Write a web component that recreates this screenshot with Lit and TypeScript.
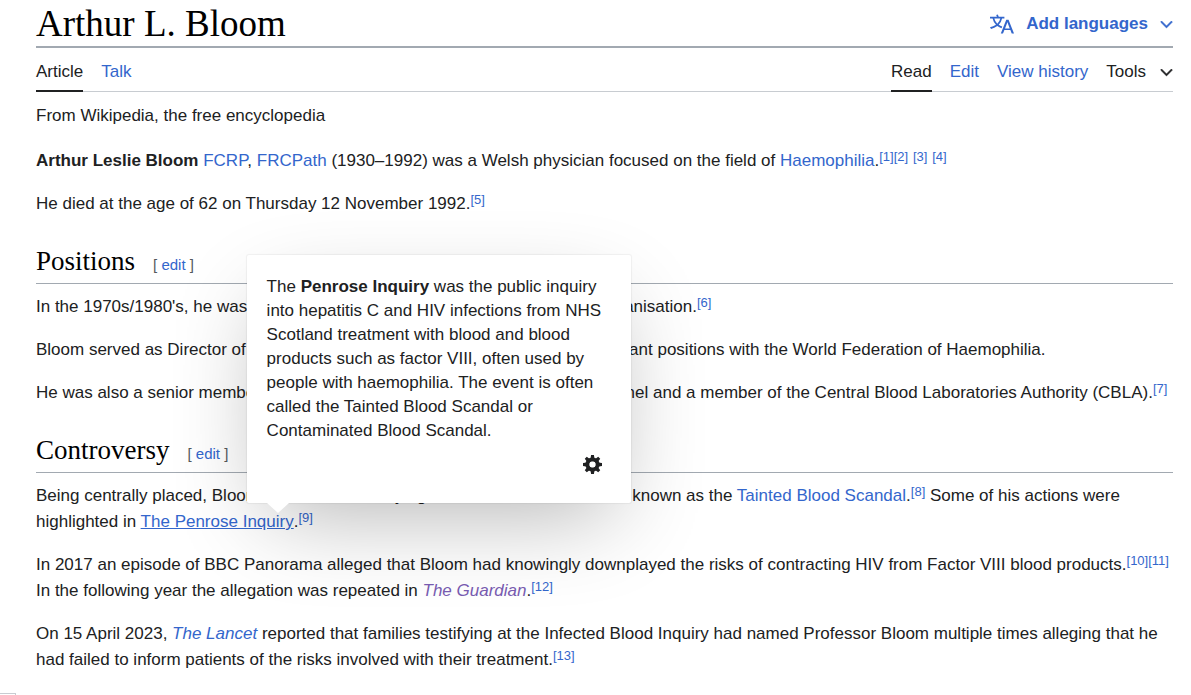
import { LitElement, html, css, svg } from "lit";
import { customElement } from "lit/decorators.js";

const chevron = svg`<path d="m17.5 4.75-7.5 7.5-7.5-7.5L1 6.25l9 9 9-9z" />`;

const cite = (n: number) => html`<sup class="ref"><a href="#cite-${n}">[${n}]</a></sup>`;

const heading = (title: string) => html`
  <div class="heading">
    <h2 class="section-title">${title}</h2>
    <span class="edit-section">[ <a href="#edit">edit</a> ]</span>
  </div>
`;

@customElement("page-preview")
class PagePreview extends LitElement {
  static styles = css`
    :host {
      display: block;
      box-sizing: border-box;
      width: 384px;
      padding: 20px;
      border-radius: 2px;
      background: #fff;
      color: #202122;
      font-size: 17px;
      line-height: 24px;
      box-shadow: 0 30px 90px -20px rgba(0, 0, 0, 0.3), 0 0 1px 1px rgba(0, 0, 0, 0.05);
    }
    :host::after {
      content: "";
      position: absolute;
      top: 100%;
      left: 20px;
      border: 11px solid transparent;
      border-top: 10px solid #fff;
      border-bottom: 0;
    }
    .extract {
      margin: 0;
    }
    .footer {
      display: flex;
      justify-content: flex-end;
      padding: 12px 9px 9px;
    }
    .settings {
      display: flex;
      padding: 0;
      border: 0;
      background: none;
      color: #202122;
    }
    .gear {
      width: 19px;
      height: 19px;
      fill: currentColor;
    }
  `;

  render() {
    const tooth = "M1.5-10h-3l-1 6.5h5m0 7h-5l1 6.5h3";
    return html`
      <p class="extract">
        The <b>Penrose Inquiry</b> was the public inquiry into hepatitis C and HIV infections from NHS Scotland
        treatment with blood and blood products such as factor VIII, often used by people with haemophilia. The event
        is often called the Tainted Blood Scandal or Contaminated Blood Scandal.
      </p>
      <div class="footer">
        <button class="settings" aria-label="Preview settings">
          <svg class="gear" viewBox="0 0 20 20">
            <g transform="translate(10 10)">
              ${[0, 45, 90, 135].map((a) => svg`<path transform="rotate(${a})" d=${tooth} />`)}
            </g>
            <path d="M10 2.5a7.5 7.5 0 0 0 0 15 7.5 7.5 0 0 0 0-15v4a3.5 3.5 0 0 1 0 7 3.5 3.5 0 0 1 0-7" />
          </svg>
        </button>
      </div>
    `;
  }
}

@customElement("app-root")
class AppRoot extends LitElement {
  static styles = css`
    :host {
      display: block;
      box-sizing: border-box;
      min-height: 100vh;
      overflow: hidden;
      position: relative;
      padding: 0 18px 0 36px;
      background: #fff;
      color: #202122;
      font-family: "Liberation Sans", Arial, sans-serif;
      font-size: 17px;
      line-height: 26px;
    }
    a {
      color: #3366cc;
      text-decoration: none;
    }
    button {
      display: flex;
      align-items: center;
      padding: 0;
      border: 0;
      background: none;
      color: inherit;
      font: inherit;
    }
    .title-bar {
      display: flex;
      justify-content: space-between;
      align-items: flex-end;
      height: 46px;
      border-bottom: 2px solid #a2a9b1;
    }
    .title {
      margin: 0;
      color: #000;
      font: 400 37px/44px Georgia, "Liberation Serif", serif;
    }
    .languages {
      padding-bottom: 9px;
      color: #3366cc;
      font-weight: 700;
      gap: 12px;
    }
    .lang-icon {
      width: 24px;
      height: 24px;
      fill: currentColor;
    }
    .chevron {
      width: 13px;
      height: 13px;
      fill: currentColor;
      stroke: currentColor;
      stroke-width: 1;
    }
    .tabs {
      display: flex;
      justify-content: space-between;
      height: 43px;
      border-bottom: 1px solid #c8ccd1;
    }
    .tab-group {
      display: flex;
      gap: 18px;
    }
    .tab {
      box-sizing: border-box;
      height: 44px;
      padding-top: 6px;
      border-bottom: 2px solid transparent;
      line-height: 36px;
    }
    .current {
      border-color: #202122;
      color: #202122;
    }
    .tools {
      gap: 14px;
    }
    .tagline {
      margin: 11px 0 19px;
    }
    .para {
      margin: 0 0 17px;
    }
    .ref {
      font-size: 13px;
      line-height: 1;
      vertical-align: 5px;
    }
    .heading {
      display: flex;
      align-items: baseline;
      gap: 18px;
      margin: 28px 0 10px;
      padding-bottom: 5px;
      border-bottom: 1px solid #a2a9b1;
    }
    .section-title {
      margin: 0;
      color: #000;
      font: 400 27px/32px Georgia, "Liberation Serif", serif;
    }
    .edit-section {
      color: #54595d;
      font-size: 15px;
    }
    .visited {
      color: #795cb2;
    }
    .anchor {
      position: relative;
    }
    .hovered {
      text-decoration: underline;
    }
    .preview {
      position: absolute;
      left: 106px;
      bottom: 28px;
    }
    .status-edge {
      position: absolute;
      left: 0;
      bottom: 0;
      width: 15px;
      height: 1px;
      border-top: 1px solid #c8ccd1;
      border-right: 1px solid #c8ccd1;
    }
  `;

  render() {
    return html`
      <header>
        <div class="title-bar">
          <h1 class="title">Arthur L. Bloom</h1>
          <button class="languages">
            <svg class="lang-icon" viewBox="0 0 20 20">
              <path
                d="M20 18h-1.44a.6.6 0 0 1-.4-.12.8.8 0 0 1-.23-.31L17 15h-5l-1 2.54a.8.8 0 0 1-.22.3.6.6 0 0 1-.4.14H9l4.55-11.47h1.89zm-3.53-4.31L14.89 9.5a12 12 0 0 1-.39-1.24q-.09.37-.19.69l-.19.56-1.58 4.19zm-6.3-1.58a13.4 13.4 0 0 1-2.91-1.41 11.46 11.46 0 0 0 2.81-5.37H12V4H7.31a4 4 0 0 0-.2-.56C6.87 2.79 6.6 2 6.6 2l-1.47.5s.4.89.6 1.5H0v1.33h2.15A11.23 11.23 0 0 0 5 10.7a17.2 17.2 0 0 1-5 2.1q.56.82.87 1.38a23.3 23.3 0 0 0 5.22-2.51 15.6 15.6 0 0 0 3.56 1.77zM3.63 5.33h4.91a8.11 8.11 0 0 1-2.45 4.45 9.1 9.1 0 0 1-2.46-4.45"
              />
            </svg>
            <span>Add languages</span>
            <svg class="chevron" viewBox="0 0 20 20">${chevron}</svg>
          </button>
        </div>
        <nav class="tabs">
          <div class="tab-group">
            <a class="tab current" href="#article">Article</a>
            <a class="tab" href="#talk">Talk</a>
          </div>
          <div class="tab-group">
            <a class="tab current" href="#read">Read</a>
            <a class="tab" href="#edit">Edit</a>
            <a class="tab" href="#history">View history</a>
            <button class="tab tools">Tools <svg class="chevron" viewBox="0 0 20 20">${chevron}</svg></button>
          </div>
        </nav>
      </header>
      <main>
        <p class="tagline">From Wikipedia, the free encyclopedia</p>
        <p class="para">
          <b>Arthur Leslie Bloom</b> <a href="#fcrp">FCRP</a>, <a href="#frcpath">FRCPath</a> (1930–1992) was a Welsh
          physician focused on the field of <a href="#haemophilia">Haemophilia</a>.${cite(1)}${cite(2)} ${cite(3)}
          ${cite(4)}
        </p>
        <p class="para">He died at the age of 62 on Thursday 12 November 1992.${cite(5)}</p>
        ${heading("Positions")}
        <p class="para">
          In the 1970s/1980's, he was Chairman of UK Haemophilia Centre Doctors Organisation.${cite(6)}
        </p>
        <p class="para">
          Bloom served as Director of the Cardiff Haemophilia Centre and he held important positions with the World
          Federation of Haemophilia.
        </p>
        <p class="para">
          He was also a senior member of the Haemophilia Society Medical Advisory Panel and a member of the Central
          Blood Laboratories Authority (CBLA).${cite(7)}
        </p>
        ${heading("Controversy")}
        <p class="para">
          Being centrally placed, Bloom was involved in trying to solve what has become known as the
          <a href="#scandal">Tainted Blood Scandal</a>.${cite(8)} Some of his actions were highlighted in
          <span class="anchor"><a class="hovered" href="#penrose">The Penrose Inquiry</a><page-preview class="preview"></page-preview></span>.${cite(9)}
        </p>
        <p class="para">
          In 2017 an episode of BBC Panorama alleged that Bloom had knowingly downplayed the risks of contracting HIV
          from Factor VIII blood products.${cite(10)}${cite(11)} In the following year the allegation was repeated in
          <a class="visited" href="#guardian"><i>The Guardian</i></a>.${cite(12)}
        </p>
        <p class="para">
          On 15 April 2023, <a href="#lancet"><i>The Lancet</i></a> reported that families testifying at the Infected
          Blood Inquiry had named Professor Bloom multiple times alleging that he had failed to inform patients of the
          risks involved with their treatment.${cite(13)}
        </p>
      </main>
      <div class="status-edge"></div>
    `;
  }
}
